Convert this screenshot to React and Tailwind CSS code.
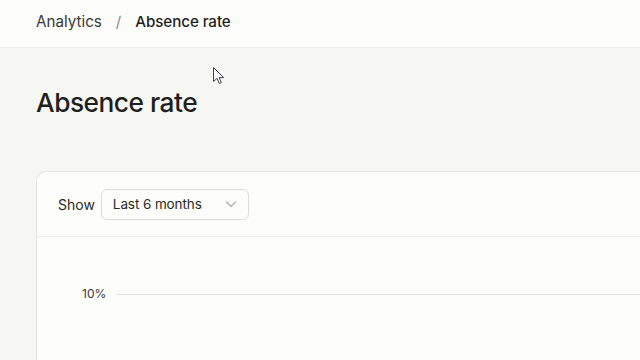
export default function App() {
  return (
    <div className="relative h-[360px] w-[640px] overflow-hidden bg-[#f6f6f3] font-['Inter',sans-serif] text-[#1f1f1d]">
      {/* Breadcrumb */}
      <header className="flex h-[48px] items-start gap-[14px] border-b border-[#ececE8] bg-[#fcfcfa] pl-[36px] pt-[12px] text-[15.2px] leading-[20px]">
        <span className="text-[#3a3a37]">Analytics</span>
        <span className="text-[#8a8a86]">/</span>
        <span className="font-medium tracking-[-0.1px]">Absence rate</span>
      </header>

      <div className="pl-[36px]">
        <h1 className="mt-[37px] text-[26.3px] font-medium leading-[36px] tracking-[-0.5px]">Absence rate</h1>

        <div className="mt-[50px] rounded-tl-[10px] border-l border-t border-[#e6e6e2] bg-[#fdfdfa]">
          <div className="flex h-[65px] items-center gap-[6px] border-b border-[#ededea] pl-[21px]">
            <span className="text-[14px] text-[#2a2a28]">Show</span>
            <div className="flex h-[31px] w-[148px] items-center justify-between rounded-[6px] border border-[#dcdcd8] bg-[#fdfdfa] pl-[11px] pr-[9px] text-[13.5px] tracking-[-0.1px] text-[#2a2a28]">
              <span>Last 6 months</span>
              <svg width="16" height="16" viewBox="0 0 16 16" fill="none" stroke="#b5b5b1" strokeWidth="1.5" strokeLinecap="round" strokeLinejoin="round">
                <path d="M3.5 6l4.5 4.5L12.5 6" />
              </svg>
            </div>
          </div>
          <div className="flex h-[130px] items-start pt-[49px]">
            <span className="w-[79px] pl-[45px] text-[12px] leading-[16px] text-[#3a3a37]">10%</span>
            <div className="mt-[8px] h-px flex-1 bg-[#e3e3df]" />
          </div>
        </div>
      </div>

      {/* Cursor */}
      <svg className="absolute left-[213px] top-[67px]" width="12" height="18" viewBox="0 0 12 18">
        <path d="M0.5 0.5v14l3.5-3.2 2.3 5.2 2-0.9-2.2-5h4.6z" fill="#fff" stroke="#444" strokeWidth="1" strokeLinejoin="round" />
      </svg>
    </div>
  );
}
